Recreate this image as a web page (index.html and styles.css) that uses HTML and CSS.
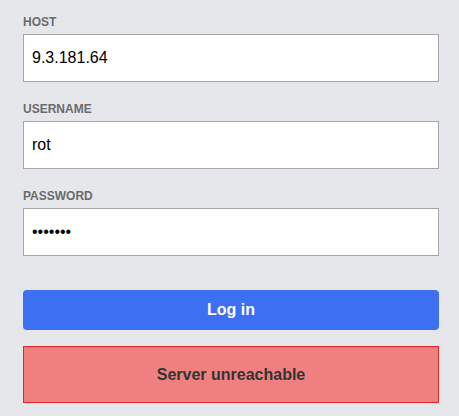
FILE: index.html
```html
<!DOCTYPE html>
<html>
<head>
<meta charset="utf-8">
<link rel="stylesheet" href="styles.css">
</head>
<body>
<form class="login">
  <div class="field">
    <label class="label">Host</label>
    <input class="input" type="text" value="9.3.181.64">
  </div>
  <div class="field">
    <label class="label">Username</label>
    <input class="input" type="text" value="rot">
  </div>
  <div class="field">
    <label class="label">Password</label>
    <input class="input" type="password" value="1234567">
  </div>
  <button class="btn" type="button">Log in</button>
  <div class="error">Server unreachable</div>
</form>
</body>
</html>
```
FILE: styles.css
```css
html, body {
  margin: 0;
  padding: 0;
  background: #e5e7eb;
  font-family: "Liberation Sans", Arial, sans-serif;
}
.login {
  display: flex;
  flex-direction: column;
  padding: 15px 20px 0 23px;
}
.field {
  display: flex;
  flex-direction: column;
  gap: 5px;
  margin-bottom: 20px;
}
.label {
  font-size: 12px;
  font-weight: bold;
  color: #6b6b6b;
  text-transform: uppercase;
  line-height: 14px;
}
.input {
  box-sizing: border-box;
  height: 48px;
  margin: 0;
  border: 1px solid #a6a6a6;
  background: #fff;
  padding: 0 8px;
  font-family: "Liberation Sans", Arial, sans-serif;
  font-size: 16px;
  color: #000;
  outline: none;
}
.btn {
  margin: 14px 0 16px;
  height: 40px;
  border: none;
  border-radius: 4px;
  background: #3c6ff1;
  color: #fff;
  font-family: "Liberation Sans", Arial, sans-serif;
  font-size: 16px;
  font-weight: bold;
}
.error {
  box-sizing: border-box;
  height: 57px;
  display: flex;
  align-items: center;
  justify-content: center;
  background: #f08080;
  border: 1px solid #e2272b;
  color: #333;
  font-size: 16px;
  font-weight: bold;
}
```
